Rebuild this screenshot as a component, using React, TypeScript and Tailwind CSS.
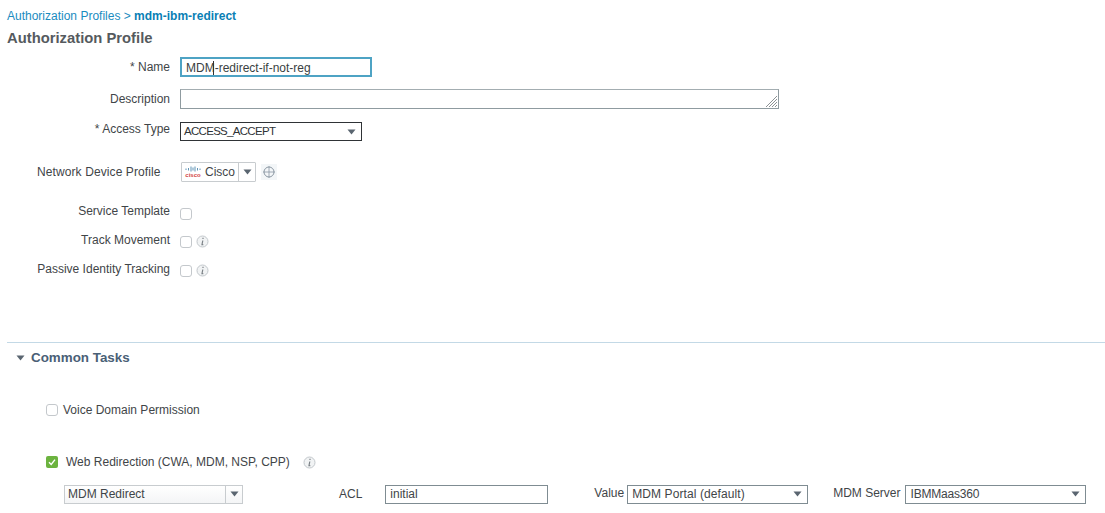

import React from "react";

const Caret = () => (
  <svg width="9" height="6" viewBox="0 0 9 6" className="shrink-0"><path d="M0.5 0.5H8.5L4.5 5.5Z" fill="#5a6570" /></svg>
);

const Info = () => (
  <svg width="13" height="13" viewBox="0 0 13 13" className="shrink-0">
    <circle cx="6.5" cy="6.5" r="5.5" fill="#f1f3f4" stroke="#c3c8cc" />
    <path d="M7 2.8v1.3M6.8 5.5 6 9.6h1.3" stroke="#7d8388" strokeWidth="1.2" fill="none" />
  </svg>
);

const Check = ({ on = false }: { on?: boolean }) =>
  on ? (
    <span className="flex h-3 w-3 shrink-0 items-center justify-center rounded-[2px] bg-[#6cb33f]">
      <svg width="10" height="10" viewBox="0 0 10 10"><path d="M2 5.2 4.2 7.5 8 2.6" stroke="#fff" strokeWidth="1.4" fill="none" /></svg>
    </span>
  ) : (
    <span className="block h-3 w-3 shrink-0 rounded-[3px] border border-[#c4c8cc] bg-white" />
  );

const CiscoLogo = () => (
  <span className="flex w-[16px] shrink-0 flex-col items-center">
    <svg width="16" height="6" viewBox="0 0 16 6" className="block">
      <path d="M1 2.500v1.500M3.500 2v2.500M6 .5v5M8 1.500v3M10 .5v5M12.500 2v2.500M15 2.500v1.500" stroke="#5f93b5" strokeWidth="1" fill="none" />
    </svg>
    <span className="text-[6px] font-bold leading-[6px] text-[#d2433f]">cisco</span>
  </span>
);

const Target = () => (
  <svg width="16" height="16" viewBox="0 0 16 16" className="shrink-0">
    <rect width="16" height="16" fill="#f3f6f8" />
    <circle cx="8" cy="8" r="5" fill="none" stroke="#8c98a3" />
    <path d="M8 2v12M2 8h12" stroke="#8c98a3" strokeWidth="0.800" />
  </svg>
);

const Row = ({ label, h, mt, lift = "", children }: { label: string; h: string; mt: string; lift?: string; children: React.ReactNode }) => (
  <div className={`flex items-center ${h} ${mt}`}>
    <div className={`w-[170px] shrink-0 text-right text-[12px] text-[#3f4548] ${lift}`}>{label}</div>
    <div className="ml-[10px] flex items-center">{children}</div>
  </div>
);

export default function App() {
  return (
    <div className="h-[513px] w-[1105px] overflow-hidden bg-white pt-[9px] text-[12px] leading-none text-[#3f4548] [font-family:'Liberation_Sans',Arial,sans-serif]">
      <div className="ml-[7px] h-[14px] text-[12px] leading-[14px] text-[#1a8cbf]">
        Authorization Profiles &gt; <b className="font-bold text-[#0a7fb5]">mdm-ibm-redirect</b>
      </div>
      <div className="ml-[7px] mt-[8px] h-[15px] text-[14.800px] leading-[15px] font-bold text-[#555a5e]">Authorization Profile</div>

      <Row label="* Name" h="h-5" mt="mt-[11px]">
        <div className="relative flex h-5 w-[192px] items-center border-2 border-[#4ea3c4] pl-1 pt-px text-[12px] text-[#3a3f42]">
          MDM-redirect-if-not-reg
          <span className="absolute left-[31px] top-[2px] h-[14px] w-px bg-[#333]" />
        </div>
      </Row>
      <Row label="Description" h="h-5" mt="mt-3">
        <div className="relative h-5 w-[599px] border border-[#8f9ba0] border-t-[#a3adb1] bg-white">
          <svg width="13" height="13" viewBox="0 0 13 13" className="absolute bottom-0 right-0">
            <path d="M1 12 12 1M4 12 12 4M7 12 12 7M10 12 12 10" stroke="#8c9295" strokeWidth="1" />
          </svg>
        </div>
      </Row>
      <Row label="* Access Type" h="h-5" mt="mt-3" lift="-mt-[5px]">
        <div className="flex h-[19px] w-[182px] items-center justify-between border border-[#2f3336] pl-[3px] pr-[5px] pt-px text-[11.500px] tracking-[-0.700px] text-[#2f3336]">
          ACCESS_ACCEPT
          <Caret />
        </div>
      </Row>
      <div className="mt-[21px] flex h-5 items-center">
        <div className="ml-[37px] w-[133px] shrink-0 text-[12px] tracking-[0.100px]">Network Device Profile</div>
        <div className="ml-[11px] flex h-5 w-[75px] items-center rounded-[1px] border border-[#c8cccf] text-[12px]">
          <div className="flex h-full flex-1 items-center gap-[4px] pl-[3px]"><CiscoLogo />Cisco</div>
          <div className="flex h-full w-[17px] items-center justify-center border-l border-[#c8cccf]"><Caret /></div>
        </div>
        <div className="ml-[5px]"><Target /></div>
      </div>
      <Row label="Service Template" h="h-4" mt="mt-[21px]">
        <div className="mt-[5px]"><Check /></div>
      </Row>
      <Row label="Track Movement" h="h-4" mt="mt-[13px]">
        <div className="mt-[3px] flex items-center gap-[4px]"><Check /><Info /></div>
      </Row>
      <Row label="Passive Identity Tracking" h="h-4" mt="mt-[13px]">
        <div className="mt-[3px] flex items-center gap-[4px]"><Check /><Info /></div>
      </Row>

      <div className="ml-[7px] mt-[65px] border-t border-[#c3d9e6]" />
      <div className="ml-4 mt-[8px] flex h-[14px] items-center gap-[6px] text-[13.400px] font-bold text-[#4a6076]">
        <Caret />
        Common Tasks
      </div>

      <div className="ml-[46px] mt-[38px] flex h-[14px] items-center gap-[5px]"><Check />Voice Domain Permission</div>
      <div className="ml-[46px] mt-[38px] flex h-[14px] items-center"><Check on /><span className="ml-2">Web Redirection (CWA, MDM, NSP, CPP)</span><span className="ml-[13px]"><Info /></span></div>

      <div className="ml-[64px] mt-[15px] flex h-5 items-center">
        <div className="flex h-[19px] w-[179px] items-center border border-[#c8cccf] bg-linear-to-b from-white to-[#f4f5f6] text-[12px]">
          <div className="flex-1 pl-[3px]">MDM Redirect</div>
          <div className="flex h-full w-[17px] items-center justify-center border-l border-[#c8cccf]"><Caret /></div>
        </div>
        <span className="ml-[96px]">ACL</span>
        <div className="ml-[23px] flex h-[19px] w-[163px] items-center border border-[#7f8c92] pl-[4px]">initial</div>
        <span className="ml-[46px] -mt-[3px]">Value</span>
        <div className="ml-[3px] flex h-[19px] w-[181px] items-center justify-between border border-[#7f8c92] pl-[4px] pr-[5px] tracking-[0.100px]">MDM Portal (default)<Caret /></div>
        <span className="ml-[25px] -mt-[3px]">MDM Server</span>
        <div className="ml-[4px] flex h-[19px] w-[181px] items-center justify-between border border-[#7f8c92] pl-[5px] pr-[5px] tracking-[-0.200px]">IBMMaas360<Caret /></div>
      </div>
    </div>
  );
}
